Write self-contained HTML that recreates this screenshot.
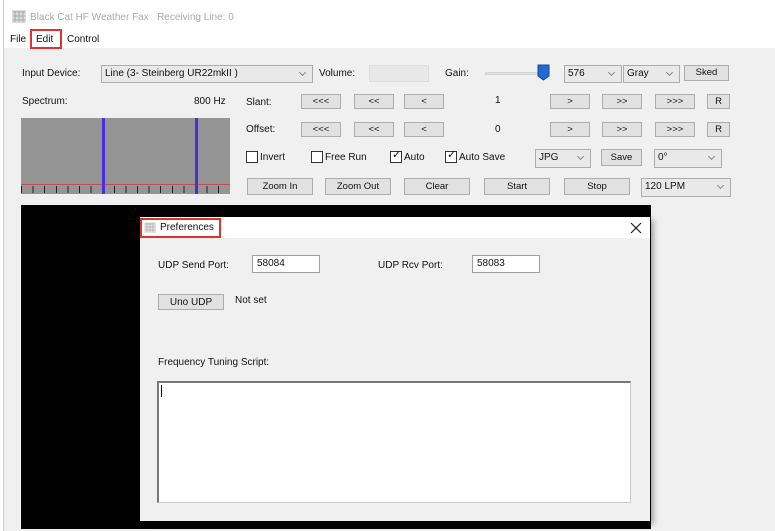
<!DOCTYPE html>
<html><head><meta charset="utf-8"><style>
*{box-sizing:border-box;margin:0;padding:0}
body{width:775px;height:531px;overflow:hidden;background:#fff;font-family:"Liberation Sans",sans-serif;font-size:10px;color:#111;position:relative}
.a{position:absolute;white-space:nowrap}
.btn{position:absolute;background:#e1e1e1;border:1px solid #adadad;text-align:center;font-size:9.5px;line-height:14px}
.cb{position:absolute;background:#e9e9e9;border:1px solid #adadad;font-size:10px;padding-left:3px;line-height:16px}
.cb:after{content:"";position:absolute;right:7px;top:4px;width:4px;height:4px;border-right:1px solid #888;border-bottom:1px solid #888;transform:rotate(45deg)}
.chk{position:absolute;width:12px;height:12px;border:1px solid #333;background:#fff}
.tb{position:absolute;background:#fff;border:1px solid #a0a0a0;font-size:10px;padding-left:4px;line-height:16px}
</style></head><body>
<div class="a" style="left:0;top:0;width:4px;height:531px;border-right:1px solid #ccc"></div>
<div class="a" style="left:4px;top:48px;width:771px;height:483px;background:#f0f0f0"></div>
<svg class="a" style="left:12px;top:10px" width="14" height="13"><rect width="14" height="13" fill="#ddd"/><path d="M1 2h12M1 6h12M1 10h12M3 1v11M7 1v11M11 1v11" stroke="#aaa" stroke-width="1"/></svg>
<div class="a" style="left:30px;top:12px;color:#aaa;font-size:10px">Black Cat HF Weather Fax &nbsp; Receiving Line: 0</div>
<div class="a" style="left:10px;top:34px">File</div>
<div class="a" style="left:30px;top:29px;width:32px;height:20px;border:2px solid #d33"></div>
<div class="a" style="left:36px;top:34px">Edit</div>
<div class="a" style="left:67px;top:34px">Control</div>

<div class="a" style="left:22px;top:68px">Input Device:</div>
<div class="cb" style="left:101px;top:65px;width:212px;height:18px">Line (3- Steinberg UR22mkII )</div>
<div class="a" style="left:319px;top:68px">Volume:</div>
<div class="a" style="left:369px;top:65px;width:60px;height:17px;background:#e8e8e8;border:1px solid #ddd"></div>
<div class="a" style="left:445px;top:68px">Gain:</div>
<div class="a" style="left:485px;top:72px;width:56px;height:3px;background:#e0e0e0;border:1px solid #d4d4d4"></div>
<svg class="a" style="left:537px;top:64px" width="13" height="17"><path d="M1 1h11v11l-5.5 4l-5.5-4z" fill="#1f6bd6" stroke="#14499a"/></svg>
<div class="cb" style="left:564px;top:65px;width:58px;height:18px">576</div>
<div class="cb" style="left:623px;top:65px;width:57px;height:18px">Gray</div>
<div class="btn" style="left:684px;top:65px;width:45px;height:16px">Sked</div>

<div class="a" style="left:22px;top:96px">Spectrum:</div>
<div class="a" style="left:194px;top:96px">800 Hz</div>
<div class="a" style="left:21px;top:118px;width:209px;height:76px;background:#959595"></div>
<div class="a" style="left:21px;top:184px;width:209px;height:1px;background:#c05050"></div>
<div class="a" style="left:21px;top:186px;width:209px;height:7px;background:repeating-linear-gradient(90deg,#222 0 1px,transparent 1px 11.6px)"></div>
<div class="a" style="left:102px;top:118px;width:3px;height:76px;background:#4a2fe0"></div>
<div class="a" style="left:195px;top:118px;width:3px;height:76px;background:#4a2fe0"></div>

<div class="a" style="left:246px;top:97px">Slant:</div>
<div class="btn" style="left:301px;top:94px;width:40px;height:15px">&lt;&lt;&lt;</div>
<div class="btn" style="left:354px;top:94px;width:40px;height:15px">&lt;&lt;</div>
<div class="btn" style="left:404px;top:94px;width:40px;height:15px">&lt;</div>
<div class="a" style="left:495px;top:95px">1</div>
<div class="btn" style="left:550px;top:94px;width:40px;height:15px">&gt;</div>
<div class="btn" style="left:602px;top:94px;width:40px;height:15px">&gt;&gt;</div>
<div class="btn" style="left:655px;top:94px;width:40px;height:15px">&gt;&gt;&gt;</div>
<div class="btn" style="left:707px;top:94px;width:23px;height:15px">R</div>

<div class="a" style="left:246px;top:124px">Offset:</div>
<div class="btn" style="left:301px;top:122px;width:40px;height:15px">&lt;&lt;&lt;</div>
<div class="btn" style="left:354px;top:122px;width:40px;height:15px">&lt;&lt;</div>
<div class="btn" style="left:404px;top:122px;width:40px;height:15px">&lt;</div>
<div class="a" style="left:495px;top:124px">0</div>
<div class="btn" style="left:550px;top:122px;width:40px;height:15px">&gt;</div>
<div class="btn" style="left:602px;top:122px;width:40px;height:15px">&gt;&gt;</div>
<div class="btn" style="left:655px;top:122px;width:40px;height:15px">&gt;&gt;&gt;</div>
<div class="btn" style="left:707px;top:122px;width:23px;height:15px">R</div>

<div class="chk" style="left:246px;top:151px"></div><div class="a" style="left:260px;top:152px">Invert</div>
<div class="chk" style="left:311px;top:151px"></div><div class="a" style="left:325px;top:152px">Free Run</div>
<div class="chk" style="left:390px;top:151px"></div><div class="a" style="left:392px;top:148px;font-size:11px">✓</div><div class="a" style="left:404px;top:152px">Auto</div>
<div class="chk" style="left:445px;top:151px"></div><div class="a" style="left:447px;top:148px;font-size:11px">✓</div><div class="a" style="left:459px;top:152px">Auto Save</div>
<div class="cb" style="left:535px;top:149px;width:56px;height:19px">JPG</div>
<div class="btn" style="left:601px;top:149px;width:41px;height:17px;line-height:16px">Save</div>
<div class="cb" style="left:654px;top:149px;width:68px;height:19px">0°</div>

<div class="btn" style="left:247px;top:178px;width:66px;height:17px;line-height:16px">Zoom In</div>
<div class="btn" style="left:325px;top:178px;width:66px;height:17px;line-height:16px">Zoom Out</div>
<div class="btn" style="left:404px;top:178px;width:66px;height:17px;line-height:16px">Clear</div>
<div class="btn" style="left:484px;top:178px;width:66px;height:17px;line-height:16px">Start</div>
<div class="btn" style="left:564px;top:178px;width:66px;height:17px;line-height:16px">Stop</div>
<div class="cb" style="left:641px;top:178px;width:90px;height:19px">120 LPM</div>

<div class="a" style="left:21px;top:205px;width:630px;height:324px;background:#000"></div>
<div class="a" style="left:140px;top:217px;width:510px;height:304px;background:#f0f0f0;box-shadow:3px 3px 6px rgba(0,0,0,.4)"></div>
<div class="a" style="left:140px;top:217px;width:510px;height:21px;background:#fff"></div>
<div class="a" style="left:140px;top:218px;width:81px;height:20px;border:2px solid #d33"></div>
<svg class="a" style="left:144px;top:222px" width="12" height="11"><rect width="12" height="11" fill="#e4e4e4"/><path d="M1 2h10M1 5h10M1 8h10M3 1v9M6 1v9M9 1v9" stroke="#bbb"/></svg>
<div class="a" style="left:160px;top:222px">Preferences</div>
<svg class="a" style="left:630px;top:222px" width="12" height="12"><path d="M1 1L11 11M11 1L1 11" stroke="#222" stroke-width="1.2"/></svg>

<div class="a" style="left:158px;top:260px">UDP Send Port:</div>
<div class="tb" style="left:252px;top:255px;width:68px;height:18px">58084</div>
<div class="a" style="left:378px;top:260px">UDP Rcv Port:</div>
<div class="tb" style="left:472px;top:255px;width:68px;height:18px">58083</div>
<div class="btn" style="left:158px;top:294px;width:66px;height:16px;font-size:10px;line-height:16px">Uno UDP</div>
<div class="a" style="left:235px;top:295px">Not set</div>
<div class="a" style="left:158px;top:357px">Frequency Tuning Script:</div>
<div class="a" style="left:157px;top:381px;width:474px;height:122px;background:#fff;border:1px solid #ccc;border-top:2px solid #777;border-left:2px solid #777"></div>
<div class="a" style="left:161px;top:385px;width:1px;height:12px;background:#000"></div>
</body></html>
